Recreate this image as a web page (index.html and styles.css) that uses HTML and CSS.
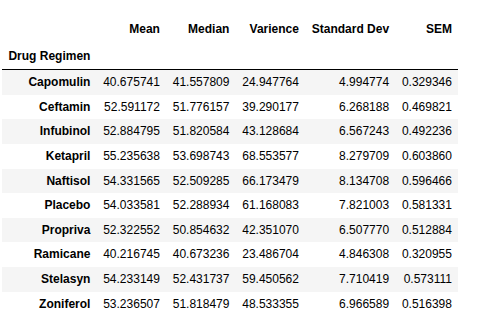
FILE: index.html
```html
<!DOCTYPE html>
<html lang="en">
<head>
  <meta charset="utf-8">
  <title>Summary statistics</title>
  <link rel="stylesheet" href="styles.css">
</head>
<body>
  <div class="output-area">
    <table class="dataframe">
      <thead>
        <tr>
          <th></th>
          <th>Mean</th>
          <th>Median</th>
          <th>Varience</th>
          <th>Standard Dev</th>
          <th>SEM</th>
        </tr>
        <tr>
          <th class="index-name">Drug Regimen</th>
          <th></th>
          <th></th>
          <th></th>
          <th></th>
          <th></th>
        </tr>
      </thead>
      <tbody>
        <tr><th>Capomulin</th><td>40.675741</td><td>41.557809</td><td>24.947764</td><td>4.994774</td><td>0.329346</td></tr>
        <tr><th>Ceftamin</th><td>52.591172</td><td>51.776157</td><td>39.290177</td><td>6.268188</td><td>0.469821</td></tr>
        <tr><th>Infubinol</th><td>52.884795</td><td>51.820584</td><td>43.128684</td><td>6.567243</td><td>0.492236</td></tr>
        <tr><th>Ketapril</th><td>55.235638</td><td>53.698743</td><td>68.553577</td><td>8.279709</td><td>0.603860</td></tr>
        <tr><th>Naftisol</th><td>54.331565</td><td>52.509285</td><td>66.173479</td><td>8.134708</td><td>0.596466</td></tr>
        <tr><th>Placebo</th><td>54.033581</td><td>52.288934</td><td>61.168083</td><td>7.821003</td><td>0.581331</td></tr>
        <tr><th>Propriva</th><td>52.322552</td><td>50.854632</td><td>42.351070</td><td>6.507770</td><td>0.512884</td></tr>
        <tr><th>Ramicane</th><td>40.216745</td><td>40.673236</td><td>23.486704</td><td>4.846308</td><td>0.320955</td></tr>
        <tr><th>Stelasyn</th><td>54.233149</td><td>52.431737</td><td>59.450562</td><td>7.710419</td><td>0.573111</td></tr>
        <tr><th>Zoniferol</th><td>53.236507</td><td>51.818479</td><td>48.533355</td><td>6.966589</td><td>0.516398</td></tr>
      </tbody>
    </table>
  </div>
</body>
</html>
```

FILE: styles.css
```css
* {
  margin: 0;
  padding: 0;
  box-sizing: border-box;
}

body {
  font-family: "Liberation Sans", Arial, sans-serif;
  font-size: 12px;
  color: #000;
  background: #fff;
}

.output-area {
  padding: 16px 0 0 2px;
}

.dataframe {
  border-collapse: collapse;
  border-spacing: 0;
  border: none;
}

.dataframe thead {
  border-bottom: 1px solid #000;
  vertical-align: bottom;
}

.dataframe th,
.dataframe td {
  text-align: right;
  vertical-align: middle;
  padding: 6px 6.4px;
  line-height: 12.6px;
  white-space: nowrap;
  border: none;
}

.dataframe thead th {
  padding-top: 7px;
  padding-bottom: 7px;
}

.dataframe th {
  font-weight: bold;
}

.dataframe .index-name {
  text-align: left;
}

.dataframe tbody tr:nth-child(odd) {
  background: #f5f5f5;
}
```
